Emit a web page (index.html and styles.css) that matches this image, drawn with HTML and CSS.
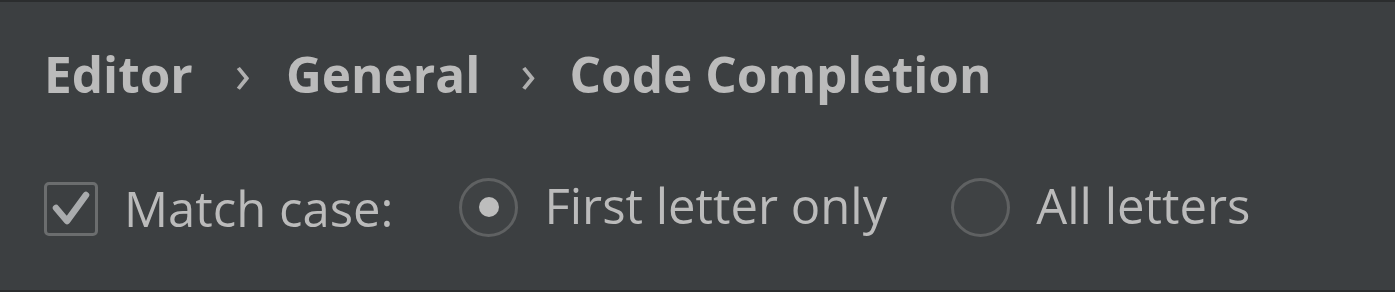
FILE: index.html
```html
<!DOCTYPE html>
<html>
<head>
<meta charset="utf-8">
<link rel="stylesheet" href="styles.css">
</head>
<body>
<div class="panel">
  <nav class="crumbs">
    <span class="crumb">Editor</span>
    <span class="sep">›</span>
    <span class="crumb">General</span>
    <span class="sep second">›</span>
    <span class="crumb">Code Completion</span>
  </nav>
  <div class="options">
    <label class="check">
      <span class="box">
        <svg viewBox="0 0 54 54" width="54" height="54"><path d="M12 26 L23 39 L42 13" fill="none" stroke="#a9abad" stroke-width="6.5" stroke-linecap="round" stroke-linejoin="round"/></svg>
      </span>
      <span class="label">Match case:</span>
    </label>
    <label class="radio first">
      <span class="circle on"><span class="dot"></span></span>
      <span class="label">First letter only</span>
    </label>
    <label class="radio">
      <span class="circle"></span>
      <span class="label">All letters</span>
    </label>
  </div>
</div>
</body>
</html>
```
FILE: styles.css
```css
html, body {
  margin: 0;
  padding: 0;
  background: #3c3f41;
}
body {
  width: 1395px;
  height: 292px;
  box-sizing: border-box;
  border-top: 2px solid #2b2d2e;
  border-bottom: 2px solid #2b2d2e;
  font-family: "Open Sans", "Noto Sans", sans-serif;
  color: #bbbbbb;
}
.panel {
  padding: 37px 0 0 44px;
}
.crumbs {
  display: flex;
  align-items: baseline;
  font-size: 49.5px;
  font-weight: 700;
  line-height: 70px;
  height: 70px;
}
.sep {
  font-weight: 400;
  color: #b0b0b0;
  margin: 0 35px 0 42px;
  font-size: 54px;
  line-height: 1;
}
.sep.second {
  margin: 0 33px 0 40px;
}
.options {
  display: flex;
  align-items: center;
  margin-top: 67px;
  font-size: 49px;
  line-height: 60px;
}
.check, .radio {
  display: flex;
  align-items: center;
}
.box {
  width: 54px;
  height: 54px;
  box-sizing: border-box;
  border: 3px solid #6b6d6e;
  border-radius: 5px;
  display: flex;
  align-items: center;
  justify-content: center;
  margin-top: 4px;
}
.box svg {
  flex: none;
}
.check .label {
  margin-left: 26px;
  margin-top: 2px;
}
.radio.first {
  margin-left: 66px;
}
.radio + .radio {
  margin-left: 64px;
}
.circle {
  width: 59px;
  height: 59px;
  box-sizing: border-box;
  border: 3px solid #5f6162;
  border-radius: 50%;
  background: #3f4244;
  display: flex;
  align-items: center;
  justify-content: center;
}
.dot {
  width: 20px;
  height: 20px;
  border-radius: 50%;
  background: #bdbdbd;
}
.radio .label {
  margin-left: 26px;
  margin-top: -4px;
}
```
